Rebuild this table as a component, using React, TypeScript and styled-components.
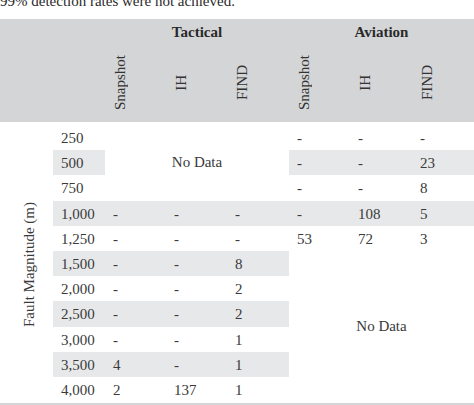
import React from 'react';
import styled, { createGlobalStyle } from 'styled-components';

type Row = { label: string; tactical?: string[]; aviation?: string[] };

const rows: Row[] = [
  { label: '250', aviation: ['-', '-', '-'] },
  { label: '500', aviation: ['-', '-', '23'] },
  { label: '750', aviation: ['-', '-', '8'] },
  { label: '1,000', tactical: ['-', '-', '-'], aviation: ['-', '108', '5'] },
  { label: '1,250', tactical: ['-', '-', '-'], aviation: ['53', '72', '3'] },
  { label: '1,500', tactical: ['-', '-', '8'] },
  { label: '2,000', tactical: ['-', '-', '2'] },
  { label: '2,500', tactical: ['-', '-', '2'] },
  { label: '3,000', tactical: ['-', '-', '1'] },
  { label: '3,500', tactical: ['4', '-', '1'] },
  { label: '4,000', tactical: ['2', '137', '1'] },
];

const subHeads = ['Snapshot', 'IH', 'FIND'];

const App: React.FC = () => {
  return (
    <>
      <GlobalStyle />
      <Page>
        <Caption>99% detection rates were not achieved.</Caption>
        <Header>
          <GroupTitle $col={3}>Tactical</GroupTitle>
          <GroupTitle $col={6}>Aviation</GroupTitle>
          {[...subHeads, ...subHeads].map((h, i) => (
            <SubHead key={i} $col={i + 3}>
              <Rotated>{h}</Rotated>
            </SubHead>
          ))}
        </Header>
        <Body>
          <AxisLabel>
            <Rotated>Fault Magnitude (m)</Rotated>
          </AxisLabel>
          {rows.map((r, i) => {
            const shaded = i % 2 === 1;
            return (
              <React.Fragment key={r.label}>
                <Cell $row={i + 1} $col={2} $shaded={shaded}>
                  {r.label}
                </Cell>
                {r.tactical &&
                  r.tactical.map((v, j) => (
                    <Cell key={'t' + j} $row={i + 1} $col={3 + j} $shaded={shaded}>
                      {v}
                    </Cell>
                  ))}
                {r.aviation &&
                  r.aviation.map((v, j) => (
                    <Cell key={'a' + j} $row={i + 1} $col={6 + j} $shaded={shaded}>
                      {v}
                    </Cell>
                  ))}
              </React.Fragment>
            );
          })}
          <NoData $row="1 / 4" $col="3 / 6">No Data</NoData>
          <NoData $row="6 / 12" $col="6 / 9">No Data</NoData>
        </Body>
        <BottomRule />
      </Page>
    </>
  );
};

export default App;

const GlobalStyle = createGlobalStyle`
  html, body {
    margin: 0;
    padding: 0;
    background: #ffffff;
    overflow: hidden;
  }
  body {
    font-family: "Liberation Serif", "Times New Roman", serif;
    font-size: 15px;
    color: #333333;
  }
`;

const columns = '53px 52px 61px 61px 62px 61px 62px 62px';

const Page = styled.div`
  width: 474px;
  height: 405px;
  overflow: hidden;
  display: flex;
  flex-direction: column;
`;

const Caption = styled.div`
  margin-top: -8px;
  height: 27px;
  line-height: 19px;
  white-space: nowrap;
  color: #2a2a2a;
  flex-shrink: 0;
`;

const Header = styled.div`
  display: grid;
  grid-template-columns: ${columns};
  grid-template-rows: 26px 77px;
  height: 103px;
  background: #d4d5d7;
  flex-shrink: 0;
`;

const GroupTitle = styled.div<{ $col: number }>`
  grid-row: 1;
  grid-column: ${(p) => `${p.$col} / span 3`};
  display: flex;
  align-items: center;
  justify-content: center;
  font-weight: bold;
  color: #2a2a2a;
`;

const SubHead = styled.div<{ $col: number }>`
  grid-row: 2;
  grid-column: ${(p) => p.$col};
  display: flex;
  align-items: center;
  padding-left: 8px;
  padding-bottom: 2px;
`;

const Rotated = styled.span`
  writing-mode: vertical-rl;
  transform: rotate(180deg);
  white-space: nowrap;
  line-height: 15px;
`;

const Body = styled.div`
  display: grid;
  grid-template-columns: ${columns};
  grid-template-rows: repeat(11, 25.2px);
  margin-top: 3px;
  flex-shrink: 0;
`;

const AxisLabel = styled.div`
  grid-column: 1;
  grid-row: 1 / 12;
  display: flex;
  align-items: center;
  justify-content: center;
  padding-left: 5px;
  padding-top: 2px;
  color: #3a3a3a;
`;

const Cell = styled.div<{ $row: number; $col: number; $shaded: boolean }>`
  grid-row: ${(p) => p.$row};
  grid-column: ${(p) => p.$col};
  display: flex;
  align-items: center;
  padding: 2px 0 0 8px;
  background: ${(p) => (p.$shaded ? '#e7e8e9' : 'transparent')};
  color: #3a3a3a;
  white-space: nowrap;
`;

const NoData = styled.div<{ $row: string; $col: string }>`
  grid-row: ${(p) => p.$row};
  grid-column: ${(p) => p.$col};
  display: flex;
  align-items: center;
  justify-content: center;
  color: #3a3a3a;
`;

const BottomRule = styled.div`
  margin-top: 1px;
  height: 4px;
  background: #d4d5d7;
  flex-shrink: 0;
`;
